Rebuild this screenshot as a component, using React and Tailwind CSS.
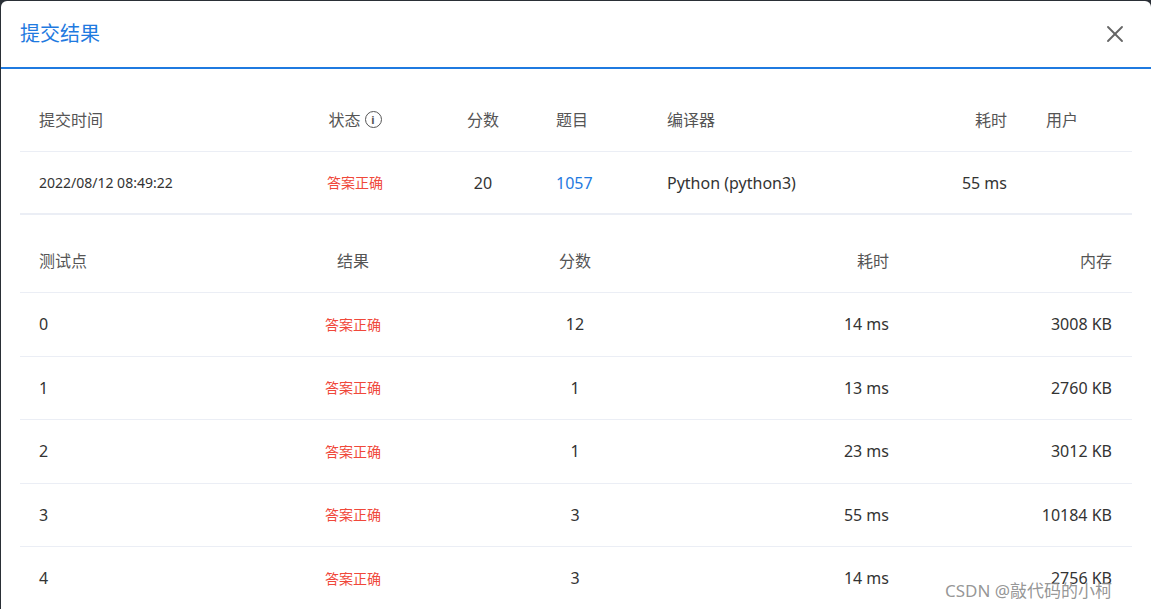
import { X } from 'lucide-react'

const font = { fontFamily: '"Noto Sans", "Noto Sans CJK SC", sans-serif' }

const cases = [
  ['0', '12', '14 ms', '3008 KB'],
  ['1', '1', '13 ms', '2760 KB'],
  ['2', '1', '23 ms', '3012 KB'],
  ['3', '3', '55 ms', '10184 KB'],
  ['4', '3', '14 ms', '2756 KB'],
]

const g1 = 'grid grid-cols-[280px_110px_146px_92px_252px_127px_105px] items-center'
const g2 = 'grid grid-cols-[230px_206px_238px_215px_223px] items-center'

export default function App() {
  return (
    <div className="w-[1151px] h-[609px] bg-[#2a2f36] overflow-hidden pt-px pl-px" style={font}>
      <div className="relative h-[700px] bg-white rounded-t-[6px]">
        <div className="h-[68px] flex items-center justify-between pl-[19px] pr-[22px] border-b-2 border-[#1f7ae0]">
          <div className="text-[20px] text-[#1f7ae0]">提交结果</div>
          <X className="w-[28px] h-[28px] text-[#666]" strokeWidth={1.6} />
        </div>

        <div className="mx-[19px] mt-[19px]">
          <div className={`${g1} h-[64px] text-[16px] text-[#555] border-b border-[#ebeef5]`}>
            <div className="pl-[19px]">提交时间</div>
            <div className="flex items-center justify-center gap-[4px]">
              状态
              <span className="w-[17px] h-[17px] rounded-full border-[1.5px] border-[#555] text-[11px] leading-none flex items-center justify-center font-bold">i</span>
            </div>
            <div className="text-center">分数</div>
            <div>题目</div>
            <div className="pl-[19px]">编译器</div>
            <div className="text-right pr-[20px]">耗时</div>
            <div className="pl-[19px]">用户</div>
          </div>
          <div className={`${g1} h-[63px] text-[16px] text-[#333] border-b-2 border-[#ebeef5]`}>
            <div className="pl-[19px] text-[14px]">2022/08/12 08:49:22</div>
            <div className="text-center text-[14px] text-[#f0483a]">答案正确</div>
            <div className="text-center">20</div>
            <div className="text-[#1f7ae0]">1057</div>
            <div className="pl-[19px]">Python (python3)</div>
            <div className="text-right pr-[20px]">55 ms</div>
            <div />
          </div>

          <div className={`${g2} h-[78px] pt-[15px] text-[16px] text-[#555] border-b border-[#ebeef5]`}>
            <div className="pl-[19px]">测试点</div>
            <div className="text-center">结果</div>
            <div className="text-center">分数</div>
            <div className="text-right pr-[20px]">耗时</div>
            <div className="text-right pr-[20px]">内存</div>
          </div>
          {cases.map(c => (
            <div key={c[0]} className={`${g2} h-[63.5px] text-[16px] text-[#333] border-b border-[#ebeef5]`}>
              <div className="pl-[19px]">{c[0]}</div>
              <div className="text-center text-[14px] text-[#f0483a]">答案正确</div>
              <div className="text-center">{c[1]}</div>
              <div className="text-right pr-[20px]">{c[2]}</div>
              <div className="text-right pr-[20px]">{c[3]}</div>
            </div>
          ))}
        </div>

        <div className="absolute left-[944px] top-[577px] text-[17px] text-[#8a8a8a]/90">CSDN @敲代码的小柯</div>
      </div>
    </div>
  )
}
